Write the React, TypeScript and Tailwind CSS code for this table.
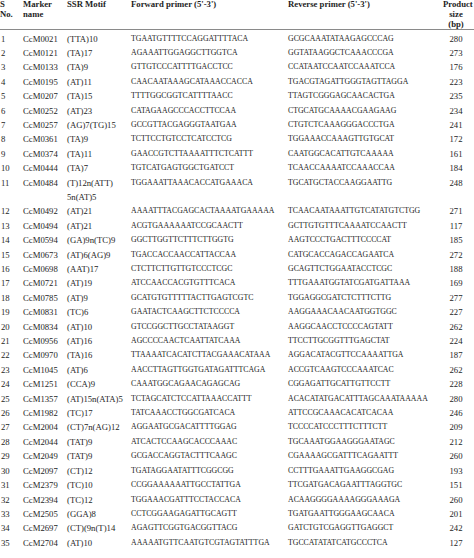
import React from 'react';

type Row = [string, string, string, string, string, string];

const rows: Row[] = [
  ['1', 'CcM0021', '(TTA)10', 'TGAATGTTTTCCAGGATTTTACA', 'GCGCAAATATAAGAGCCCAG', '280'],
  ['2', 'CcM0121', '(TA)17', 'AGAAATTGGAGGCTTGGTCA', 'GGTATAAGGCTCAAACCCGA', '273'],
  ['3', 'CcM0133', '(TA)9', 'GTTGTCCCATTTTGACCTCC', 'CCATAATCCAATCCAAATCCA', '176'],
  ['4', 'CcM0195', '(AT)11', 'CAACAATAAAGCATAAACCACCA', 'TGACGTAGATTGGGTAGTTAGGA', '223'],
  ['5', 'CcM0207', '(TA)15', 'TTTTGGCGGTCATTTTAACC', 'TTAGTCGGGAGCAACACTGA', '235'],
  ['6', 'CcM0252', '(AT)23', 'CATAGAAGCCCACCTTCCAA', 'CTGCATGCAAAACGAAGAAG', '234'],
  ['7', 'CcM0257', '(AG)7(TG)15', 'GCCGTTACGAGGGTAATGAA', 'CTGTCTCAAAGGGACCCTGA', '241'],
  ['8', 'CcM0361', '(TA)9', 'TCTTCCTGTCCTCATCCTCG', 'TGGAAACCAAAGTTGTGCAT', '172'],
  ['9', 'CcM0374', '(TA)11', 'GAACCGTCTTAAAATTTCTCATTT', 'CAATGGCACATTGTCAAAAA', '161'],
  ['10', 'CcM0444', '(TA)7', 'TGTCATGAGTGGCTGATCCT', 'TCAACCAAAATCCAAACCAA', '184'],
  ['11', 'CcM0484', '(T)12n(ATT) 5n(AT)5', 'TGGAAATTAAACACCATGAAACA', 'TGCATGCTACCAAGGAATTG', '248'],
  ['12', 'CcM0492', '(AT)21', 'AAAATTTACGAGCACTAAAATGAAAAA', 'TCAACAATAAATTGTCATATGTCTGG', '271'],
  ['13', 'CcM0494', '(AT)21', 'ACGTGAAAAAATCCGCAACTT', 'GCTTGTGTTTCAAAATCCAACTT', '117'],
  ['14', 'CcM0594', '(GA)9n(TC)9', 'GGCTTGGTTCTTTCTTGGTG', 'AAGTCCCTGACTTTCCCCAT', '185'],
  ['15', 'CcM0673', '(AT)6(AG)9', 'TGACCACCAACCATTACCAA', 'CATGCACCAGACCAGAATCA', '272'],
  ['16', 'CcM0698', '(AAT)17', 'CTCTTCTTGTTGTCCCTCGC', 'GCAGTTCTGGAATACCTCGC', '188'],
  ['17', 'CcM0721', '(AT)19', 'ATCCAACCACGTGTTTCACA', 'TTTGAAATGGTATCGATGATTAAA', '169'],
  ['18', 'CcM0785', '(AT)9', 'GCATGTGTTTTTACTTGAGTCGTC', 'TGGAGGCGATCTCTTTCTTG', '277'],
  ['19', 'CcM0831', '(TC)6', 'GAATACTCAAGCTTCTCCCCA', 'AAGGAAACAACAATGGTGGC', '227'],
  ['20', 'CcM0834', '(AT)10', 'GTCCGGCTTGCCTATAAGGT', 'AAGGCAACCTCCCCAGTATT', '262'],
  ['21', 'CcM0956', '(AT)16', 'AGCCCCAACTCAATTATCAAA', 'TTCCTTGCGGTTTGAGCTAT', '224'],
  ['22', 'CcM0970', '(TA)16', 'TTAAAATCACATCTTACGAAACATAAA', 'AGGACATACGTTCCAAAATTGA', '187'],
  ['23', 'CcM1045', '(AT)6', 'AACCTTAGTTGGTGATAGATTTCAGA', 'ACCGTCAAGTCCCAAATCAC', '262'],
  ['24', 'CcM1251', '(CCA)9', 'CAAATGGCAGAACAGAGCAG', 'CGGAGATTGCATTGTTCCTT', '228'],
  ['25', 'CcM1357', '(AT)15n(ATA)5', 'TCTAGCATCTCCATTAAACCATTT', 'ACACATATGACATTTAGCAAATAAAAA', '280'],
  ['26', 'CcM1982', '(TC)17', 'TATCAAACCTGGCGATCACA', 'ATTCCGCAAACACATCACAA', '246'],
  ['27', 'CcM2004', '(CT)7n(AG)12', 'AGGAATGCGACATTTTGGAG', 'TCCCCATCCCTTTCTTTCTT', '209'],
  ['28', 'CcM2044', '(TAT)9', 'ATCACTCCAAGCACCCAAAC', 'TGCAAATGGAAGGGAATAGC', '212'],
  ['29', 'CcM2049', '(TAT)9', 'GCGACCAGGTACTTTCAAGC', 'CGAAAAGCGATTTCAGAATTT', '260'],
  ['30', 'CcM2097', '(CT)12', 'TGATAGGAATATTTCGGCGG', 'CCTTTGAAATTGAAGGCGAG', '193'],
  ['31', 'CcM2379', '(TC)10', 'CCGGAAAAAATTGCCTATTGA', 'TTCGATGACAGAATTTAGGTGC', '151'],
  ['32', 'CcM2394', '(TC)12', 'TGGAAACGATTTCCTACCACA', 'ACAAGGGGAAAAGGGAAAGA', '260'],
  ['33', 'CcM2505', '(GGA)8', 'CCTCGGAAGAGATTGCAGTT', 'TGATGAATTGGGAAGCAACA', '201'],
  ['34', 'CcM2697', '(CT)(9n(T)14', 'AGAGTTCGGTGACGGTTACG', 'GATCTGTCGAGGTTGAGGCT', '242'],
  ['35', 'CcM2704', '(AT)10', 'AAAAATGTTCAATGTCGTAGTATTTGA', 'TGCCATATATCATGCCCTCA', '127'],
];

const cols = 'grid grid-cols-[23px_44px_64px_157px_155px_26px]';

export default function App() {
  return (
    <div className="w-[474px] h-[558px] overflow-hidden bg-white text-[#1e1e1e] font-['Liberation_Serif',serif]">
      {/* header */}
      <div className={`${cols} h-[30px] border-b border-[#8a8a8a] text-[8.7px] font-bold leading-[10px]`}>
        <div className="-mt-px">S<br />No.</div>
        <div className="-mt-px">Marker<br />name</div>
        <div className="-mt-px">SSR Motif</div>
        <div className="-mt-px">Forward primer (5'-3')</div>
        <div className="-mt-px">Reverse primer (5'-3')</div>
        <div className="-mt-px text-center whitespace-nowrap">Product<br />size<br />(bp)</div>
      </div>

      {/* rows */}
      <div className="pt-[1.5px]">
        {rows.map(([no, marker, motif, fwd, rev, size]) => (
          <div key={no} className={`${cols} text-[8.7px] leading-[14.4px]`}>
            <div className="pl-px">{no}</div>
            <div>{marker}</div>
            <div>{motif}</div>
            <div className="text-[7.8px] whitespace-nowrap">{fwd}</div>
            <div className="text-[7.8px] whitespace-nowrap">{rev}</div>
            <div className="text-center">{size}</div>
          </div>
        ))}
      </div>
    </div>
  );
}
